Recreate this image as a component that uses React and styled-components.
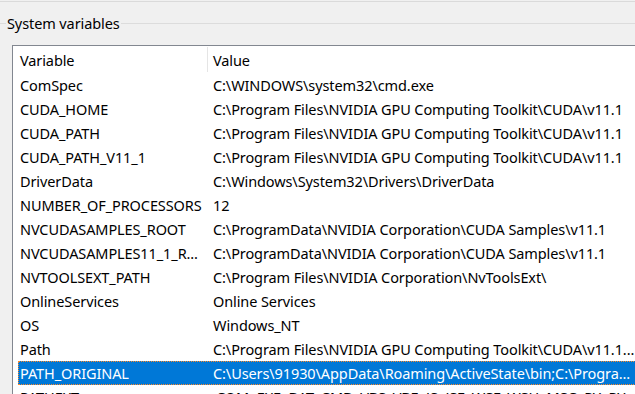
import React from 'react'
import styled, { createGlobalStyle } from 'styled-components'

const Global = createGlobalStyle`
    html, body {
        margin: 0;
        padding: 0;
        background: #f0f0f0;
        overflow: hidden;
    }
    body {
        font-family: "Noto Sans", "Open Sans", sans-serif;
        font-size: 14.5px;
        letter-spacing: -0.1px;
        color: #000;
    }
`

const Page = styled.div`
    width: 635px;
    height: 394px;
    overflow: hidden;
    background: #f0f0f0;
    border-top: 1px solid #dadada;
    margin-top: 1px;
    box-sizing: border-box;
`

const Group = styled.div`
    display: flex;
    align-items: center;
    height: 20px;
    margin-top: 11px;
`

const Rule = styled.div`
    height: 1px;
    background: #dcdcdc;
    width: ${props => props.width || 'auto'};
    flex: ${props => props.grow ? 1 : 'none'};
`

const Legend = styled.span`
    padding: 0 1px 0 1px;
    line-height: 20px;
    white-space: nowrap;
`

const ListBox = styled.div`
    margin: 12px 0 0 12px;
    width: 700px;
    height: 360px;
    background: #fff;
    border-top: 1px solid #828790;
    border-left: 1px solid #828790;
    padding-left: 5px;
    box-sizing: border-box;
`

const Row = styled.div`
    display: grid;
    grid-template-columns: 189px 1fr;
    height: ${props => props.header ? '27px' : '24px'};
    align-items: center;
    white-space: nowrap;
    box-sizing: border-box;
    background: ${props => props.selected ? '#0078d7' : 'transparent'};
    color: ${props => props.selected ? '#fff' : '#000'};
    outline: ${props => props.selected ? '1px dotted #ff8a28' : 'none'};
    outline-offset: -1px;
`

const Cell = styled.div`
    padding-left: ${props => props.second ? '6px' : '2px'};
    overflow: hidden;
    height: 100%;
    display: flex;
    align-items: center;
`

const HeadCell = styled(Cell)`
    border-left: ${props => props.second ? '1px solid #e5e5e5' : 'none'};
    padding-left: ${props => props.second ? '5px' : '2px'};
    height: 25px;
`

const rows = [
    ['ComSpec', 'C:\\WINDOWS\\system32\\cmd.exe'],
    ['CUDA_HOME', 'C:\\Program Files\\NVIDIA GPU Computing Toolkit\\CUDA\\v11.1'],
    ['CUDA_PATH', 'C:\\Program Files\\NVIDIA GPU Computing Toolkit\\CUDA\\v11.1'],
    ['CUDA_PATH_V11_1', 'C:\\Program Files\\NVIDIA GPU Computing Toolkit\\CUDA\\v11.1'],
    ['DriverData', 'C:\\Windows\\System32\\Drivers\\DriverData'],
    ['NUMBER_OF_PROCESSORS', '12'],
    ['NVCUDASAMPLES_ROOT', 'C:\\ProgramData\\NVIDIA Corporation\\CUDA Samples\\v11.1'],
    ['NVCUDASAMPLES11_1_R...', 'C:\\ProgramData\\NVIDIA Corporation\\CUDA Samples\\v11.1'],
    ['NVTOOLSEXT_PATH', 'C:\\Program Files\\NVIDIA Corporation\\NvToolsExt\\'],
    ['OnlineServices', 'Online Services'],
    ['OS', 'Windows_NT'],
    ['Path', 'C:\\Program Files\\NVIDIA GPU Computing Toolkit\\CUDA\\v11.1...'],
    ['PATH_ORIGINAL', 'C:\\Users\\91930\\AppData\\Roaming\\ActiveState\\bin;C:\\Progra...', true],
    ['PATHEXT', '.COM;.EXE;.BAT;.CMD;.VBS;.VBE;.JS;.JSE;.WSF;.WSH;.MSC;.PY;.PY...'],
]

const App = () =>
    <Page>
        <Global />
        <Group>
            <Rule width="6px" />
            <Legend>System variables</Legend>
            <Rule grow />
        </Group>
        <ListBox>
            <Row header>
                <HeadCell>Variable</HeadCell>
                <HeadCell second>Value</HeadCell>
            </Row>
            {rows.map(([name, value, selected]) =>
                <Row key={name} selected={selected}>
                    <Cell>{name}</Cell>
                    <Cell second>{value}</Cell>
                </Row>
            )}
        </ListBox>
    </Page>

export default App
